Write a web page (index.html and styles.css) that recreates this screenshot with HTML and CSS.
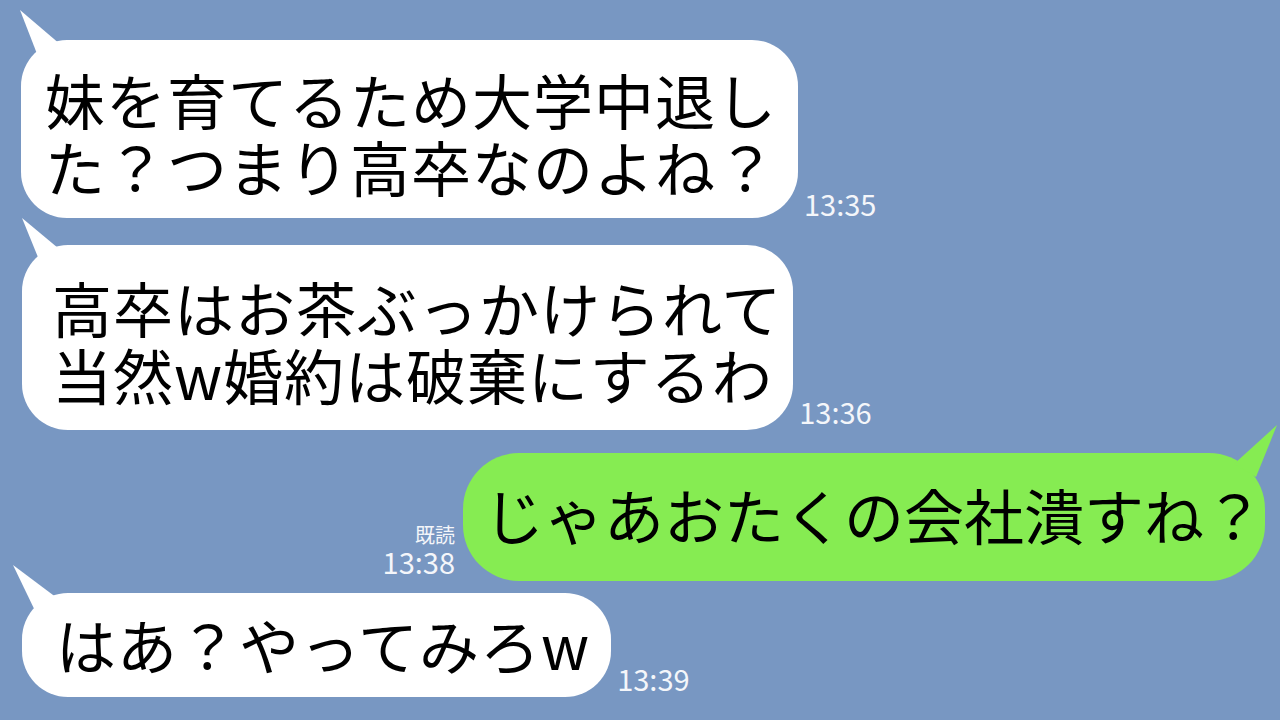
FILE: index.html
```html
<!DOCTYPE html>
<html lang="ja">
<head>
  <meta charset="UTF-8" />
  <meta name="viewport" content="width=device-width, initial-scale=1.0" />
  <title>トーク</title>
  <link rel="stylesheet" href="styles.css">
</head>
<body>
  <div class="chat">
    <div class="row row-first">
      <div class="bubble bubble-in tail-a">妹を育てるため大学中退し<br>た？つまり高卒なのよね？</div>
      <div class="meta"><span class="time">13:35</span></div>
    </div>

    <div class="row row-second">
      <div class="bubble bubble-in tail-b">高卒はお茶ぶっかけられて<br>当然w婚約は破棄にするわ</div>
      <div class="meta meta-low"><span class="time">13:36</span></div>
    </div>

    <div class="row row-mine">
      <div class="meta meta-mine">
        <span class="read">既読</span>
        <span class="time">13:38</span>
      </div>
      <div class="bubble bubble-out tail-c">じゃあおたくの会社潰すね？</div>
    </div>

    <div class="row row-last">
      <div class="bubble bubble-in tail-d">はあ？やってみろw</div>
      <div class="meta meta-low"><span class="time">13:39</span></div>
    </div>
  </div>
</body>
</html>
```

FILE: styles.css
```css
body, html {
  height: 100%;
  margin: 0;
  font-family: "Noto Sans CJK JP", "Noto Sans", sans-serif;
}
body {
  background-color: #7897c2;
  overflow: hidden;
}
.chat {
  display: flex;
  flex-direction: column;
  padding-top: 40px;
}
.row {
  display: flex;
  align-items: flex-end;
  gap: 6px;
}
.row-first {
  margin-left: 21px;
}
.row-second {
  margin-left: 22px;
  margin-top: 27px;
}
.row-mine {
  justify-content: flex-end;
  margin-right: 15px;
  margin-top: 23px;
  gap: 8px;
}
.row-last {
  margin-left: 22px;
  margin-top: 12px;
}

/* bubbles */
.bubble {
  position: relative;
  font-size: 60px;
  line-height: 67px;
  letter-spacing: 1px;
  color: #000;
  border-radius: 46px;
  white-space: nowrap;
}
.bubble-in {
  background-color: #fff;
}
.bubble-out {
  background-color: #86ec52;
  border-radius: 56px;
  letter-spacing: 0;
}
.tail-a {
  padding: 25px 21px 19px 24px;
}
.tail-b {
  padding: 28px 11px 23px 30px;
}
.tail-c {
  padding: 27px 1px 34px 21px;
}
.tail-d {
  padding: 17px 21px 20px 34px;
}
.bubble::before {
  content: "";
  position: absolute;
  background-color: inherit;
}
.tail-a::before {
  left: -2px;
  top: -31px;
  width: 50px;
  height: 55px;
  clip-path: polygon(1px 1px, 42px 36px, 20px 50px);
}
.tail-b::before {
  left: -1px;
  top: -28px;
  width: 50px;
  height: 55px;
  clip-path: polygon(1px 1px, 43px 36px, 21px 50px);
}
.tail-c::before {
  right: -13px;
  top: -29px;
  width: 50px;
  height: 55px;
  clip-path: polygon(49px 1px, 28px 53px, 6px 40px);
}
.tail-d::before {
  left: -10px;
  top: -29px;
  width: 52px;
  height: 58px;
  clip-path: polygon(1px 1px, 49px 37px, 27px 55px);
}

/* time and read marks */
.meta {
  display: flex;
  flex-direction: column;
  align-items: flex-end;
  color: #f4f6fa;
  padding-bottom: 0;
}
.meta-low {
  padding-bottom: 4px;
}
.meta-mine {
  padding-bottom: 5px;
}
.time {
  font-size: 29px;
  line-height: 29px;
}
.read {
  font-size: 20px;
  line-height: 29px;
  margin-bottom: -2px;
}
```
